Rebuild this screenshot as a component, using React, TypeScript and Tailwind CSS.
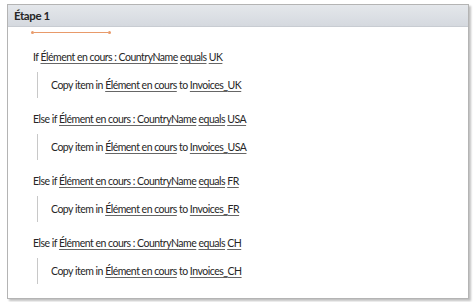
const branches = [
  { kw: "If", target: "UK" },
  { kw: "Else if", target: "USA" },
  { kw: "Else if", target: "FR" },
  { kw: "Else if", target: "CH" },
];

function Link({ children }: { children: React.ReactNode }) {
  return <span className="underline decoration-[#666] underline-offset-2">{children}</span>;
}

export default function App() {
  return (
    <div className="h-[302px] w-[474px] bg-white pl-[7px] pt-[4px] font-['Lato',sans-serif] text-[#262626]">
      <div className="h-[295px] w-[462px] border border-[#b4b4b4] bg-white shadow-[2px_2px_2px_rgba(0,0,0,0.25)]">
        <div className="flex h-[22px] items-center border-b border-[#c8ccd2] bg-gradient-to-b from-[#e4e7eb] to-[#d5d9df] pl-[6px] text-[11.5px] font-bold tracking-[-0.4px]">
          Étape 1
        </div>
        <div className="ml-[23px] mt-[4px] flex w-[80px] items-center">
          <span className="h-[3px] w-[3px] rounded-full bg-[#e89a6a]" />
          <span className="h-px flex-1 bg-[#e89a6a]" />
          <span className="h-[3px] w-[3px] rounded-full bg-[#e89a6a]" />
        </div>
        <div className="mt-[15px] flex flex-col gap-[13px] pl-[25px] text-[10.5px] leading-[16px] tracking-[-0.5px]">
          {branches.map((b) => (
            <div key={b.target} className="flex flex-col">
              <div className="h-[16px] whitespace-nowrap">
                {b.kw} <Link>Élément en cours : CountryName</Link> <Link>equals</Link> <Link>{b.target}</Link>
              </div>
              <div className="ml-[4px] mt-[7px] flex h-[26px] items-center border-l border-[#c8c8c8] pl-[13px]">
                <div className="whitespace-nowrap">
                  Copy item in <Link>Élément en cours</Link> to <Link>Invoices_{b.target}</Link>
                </div>
              </div>
            </div>
          ))}
        </div>
      </div>
    </div>
  );
}
